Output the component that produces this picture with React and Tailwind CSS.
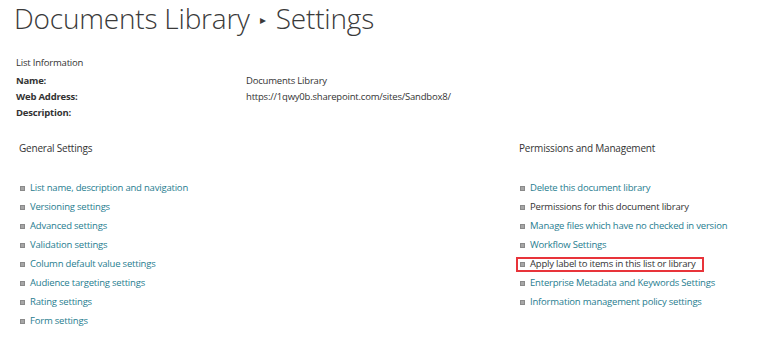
const general = [
  'List name, description and navigation',
  'Versioning settings',
  'Advanced settings',
  'Validation settings',
  'Column default value settings',
  'Audience targeting settings',
  'Rating settings',
  'Form settings',
];

const permissions = [
  { label: 'Delete this document library' },
  { label: 'Permissions for this document library', plain: true },
  { label: 'Manage files which have no checked in version' },
  { label: 'Workflow Settings' },
  { label: 'Apply label to items in this list or library', plain: true, highlight: true },
  { label: 'Enterprise Metadata and Keywords Settings' },
  { label: 'Information management policy settings' },
];

function Bullet() {
  return <span className="inline-block w-[5px] h-[5px] bg-[#a6a6a6] border border-[#8a8a8a] mr-[5px] shrink-0" />;
}

function SettingsItem({ label, plain, highlight }) {
  return (
    <li className={`flex items-center h-[19px] ${highlight ? '-ml-[4px]' : ''}`}>
      <span
        className={`flex items-center ${highlight ? 'border-2 border-[#e8343a] h-[15px] pl-[2px] pr-[6px]' : ''}`}
      >
        <Bullet />
        <span className={plain ? 'text-[#333333]' : 'text-[#1f7d8f]'}>{label}</span>
      </span>
    </li>
  );
}

function SettingsColumn({ title, items }) {
  return (
    <div>
      <h2 className="text-[10px] text-[#333333] h-[18px] flex items-center">{title}</h2>
      <ul className="mt-[22px] pl-[1px]">
        {items.map((item) => (
          <SettingsItem key={item.label} {...item} />
        ))}
      </ul>
    </div>
  );
}

export default function App() {
  return (
    <div
      className="w-[768px] h-[341px] bg-white overflow-hidden text-[9.5px] tracking-[-0.2px] text-[#333333]"
      style={{ fontFamily: '"Open Sans", "Noto Sans", sans-serif' }}
    >
      <h1 className="text-[28px] font-light text-[#3a3a3a] leading-[36px] pl-[14px] h-[47px]">
        Documents Library <span className="text-[12px] align-middle relative top-[-2px] mx-[3px]">▸</span> Settings
      </h1>

      <section className="pl-[16px] pt-[8px]">
        <div className="h-[16px] flex items-center">List Information</div>
        <div className="grid grid-cols-[230px_1fr] mt-[2px]">
          <div className="font-bold h-[16px] flex items-center">Name:</div>
          <div className="h-[16px] flex items-center">Documents Library</div>
          <div className="font-bold h-[16px] flex items-center">Web Address:</div>
          <div className="h-[16px] flex items-center">https://1qwy0b.sharepoint.com/sites/Sandbox8/</div>
          <div className="font-bold h-[16px] flex items-center">Description:</div>
          <div className="h-[16px] flex items-center"></div>
        </div>
      </section>

      <section className="grid grid-cols-[500px_1fr] pl-[19px] pt-[18px]">
        <SettingsColumn title="General Settings" items={general.map((label) => ({ label }))} />
        <SettingsColumn title="Permissions and Management" items={permissions} />
      </section>
    </div>
  );
}
